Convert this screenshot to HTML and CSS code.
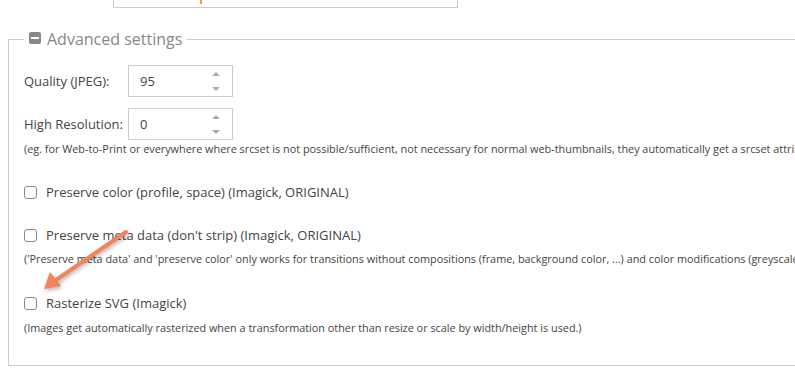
FILE: index.html
```html
<!DOCTYPE html>
<html>
    <head>
        <link rel="stylesheet" href="styles.css">
    </head>
    <body>
        <div class="top-box"><span class="top-mark"></span></div>

        <fieldset class="settings">
            <legend class="settings-title">
                <span class="minus-icon"></span>
                <span>Advanced settings</span>
            </legend>

            <div class="field-row">
                <label class="field-label">Quality (JPEG):</label>
                <div class="spin-input">
                    <span class="spin-value">95</span>
                    <span class="spin-arrows">
                        <span class="arrow-up"></span>
                        <span class="arrow-down"></span>
                    </span>
                </div>
            </div>

            <div class="field-row second">
                <label class="field-label">High Resolution:</label>
                <div class="spin-input">
                    <span class="spin-value">0</span>
                    <span class="spin-arrows">
                        <span class="arrow-up"></span>
                        <span class="arrow-down"></span>
                    </span>
                </div>
            </div>
            <div class="help help-first">(eg. for Web-to-Print or everywhere where srcset is not possible/sufficient, not necessary for normal web-thumbnails, they automatically get a srcset attribute)</div>

            <div class="check-row check-first">
                <span class="checkbox"></span>
                <span>Preserve color (profile, space) (Imagick, ORIGINAL)</span>
            </div>

            <div class="check-row check-second">
                <span class="checkbox"></span>
                <span>Preserve meta data (don't strip) (Imagick, ORIGINAL)</span>
            </div>
            <div class="help help-second">('Preserve meta data' and 'preserve color' only works for transitions without compositions (frame, background color, ...) and color modifications (greyscale, sepia, ...))</div>

            <div class="check-row check-third">
                <span class="checkbox"></span>
                <span>Rasterize SVG (Imagick)</span>
            </div>
            <div class="help help-third">(Images get automatically rasterized when a transformation other than resize or scale by width/height is used.)</div>
        </fieldset>

        <svg class="pointer" width="795" height="379" viewBox="0 0 795 379">
            <line x1="126" y1="232" x2="56" y2="280" stroke="#f2845c" stroke-width="4" stroke-linecap="round"/>
            <polygon points="44,289 50,272 61,286" fill="#f2845c"/>
        </svg>
    </body>
</html>
```

FILE: styles.css
```css
html {
    background-color: white;
}

body {
    margin: 0;
    font-family: "Open Sans", "DejaVu Sans", sans-serif;
    color: #444;
    overflow: hidden;
    width: 795px;
    height: 379px;
    position: relative;
}

.top-box {
    margin-top: -24px;
    margin-left: 113px;
    width: 343px;
    height: 30px;
    border: 1px solid #ccc;
    position: relative;
}

.top-mark {
    position: absolute;
    left: 86px;
    bottom: 3px;
    width: 2px;
    height: 4px;
    background-color: #f0a030;
}

.settings {
    margin: 20px 0 0 8px;
    width: 820px;
    border: 1px solid #ccc;
    padding: 15px 15px 29px 15px;
    box-sizing: border-box;
}

.settings-title {
    padding: 0 5px;
    font-size: 16px;
    line-height: 22px;
    color: #888;
    display: flex;
    align-items: center;
    gap: 6px;
}

.minus-icon {
    display: inline-block;
    width: 12px;
    height: 12px;
    background-color: #888;
    border-radius: 2px;
    position: relative;
    top: -1px;
}

.minus-icon::after {
    content: "";
    position: absolute;
    left: 2px;
    right: 2px;
    top: 5px;
    height: 2px;
    background-color: white;
}

.field-row {
    display: flex;
    align-items: center;
    font-size: 13px;
}

.field-row.second {
    margin-top: 11px;
}

.field-label {
    width: 104px;
}

.spin-input {
    width: 105px;
    height: 32px;
    box-sizing: border-box;
    border: 1px solid #ccc;
    display: flex;
    align-items: center;
    justify-content: space-between;
    padding: 0 12px 0 11px;
}

.spin-arrows {
    display: flex;
    flex-direction: column;
    gap: 11px;
}

.arrow-up {
    width: 0;
    height: 0;
    border-left: 4px solid transparent;
    border-right: 4px solid transparent;
    border-bottom: 4px solid #aaa;
}

.arrow-down {
    width: 0;
    height: 0;
    border-left: 4px solid transparent;
    border-right: 4px solid transparent;
    border-top: 4px solid #aaa;
}

.help {
    font-size: 10.85px;
    line-height: 16px;
    white-space: nowrap;
    color: #444;
}

.help-first {
    margin-top: 1px;
}

.check-row {
    display: flex;
    align-items: center;
    gap: 9px;
    font-size: 13px;
    line-height: 20px;
}

.check-first {
    margin-top: 25px;
}

.check-second {
    margin-top: 23px;
}

.help-second {
    margin-top: 6px;
}

.check-third {
    margin-top: 26px;
}

.help-third {
    margin-top: 7px;
}

.checkbox {
    display: inline-block;
    width: 13px;
    height: 13px;
    box-sizing: border-box;
    border: 1px solid #888;
    border-radius: 3px;
    background-color: white;
}

.pointer {
    position: absolute;
    left: 0;
    top: 0;
    filter: drop-shadow(1px 2px 2px rgba(0, 0, 0, 0.3));
}
```
